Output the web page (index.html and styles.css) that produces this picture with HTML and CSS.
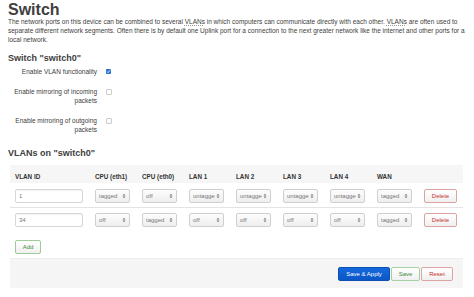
FILE: index.html
```html
<!DOCTYPE html>
<html>
<head>
<meta charset="utf-8">
<link rel="stylesheet" href="styles.css">
</head>
<body>
<div class="page">
  <h2 class="title">Switch</h2>
  <p class="desc">The network ports on this device can be combined to several <abbr>VLANs</abbr> in which computers can communicate directly with each other. <abbr>VLANs</abbr> are often used to separate different network segments. Often there is by default one Uplink port for a connection to the next greater network like the internet and other ports for a local network.</p>

  <h3 class="section-title">Switch "switch0"</h3>
  <div class="form-row">
    <label class="form-label">Enable VLAN functionality</label>
    <span class="cb checked"><svg viewBox="0 0 6 6" width="6" height="6"><path d="M1.3 3.1 L2.5 4.3 L4.8 1.6" fill="none" stroke="#fff" stroke-width="1.1"/></svg></span>
  </div>
  <div class="form-row">
    <label class="form-label">Enable mirroring of incoming packets</label>
    <span class="cb"></span>
  </div>
  <div class="form-row">
    <label class="form-label">Enable mirroring of outgoing packets</label>
    <span class="cb"></span>
  </div>

  <h3 class="section-title vlans">VLANs on "switch0"</h3>
  <table class="vlan-table">
    <colgroup>
      <col class="c-id"><col class="c-port"><col class="c-port"><col class="c-port"><col class="c-port"><col class="c-port"><col class="c-port"><col class="c-port"><col class="c-del">
    </colgroup>
    <thead>
      <tr><th>VLAN ID</th><th>CPU (eth1)</th><th>CPU (eth0)</th><th>LAN 1</th><th>LAN 2</th><th>LAN 3</th><th>LAN 4</th><th>WAN</th><th></th></tr>
    </thead>
    <tbody>
      <tr>
        <td><input class="txt" type="text" value="1"></td>
        <td><select class="sel"><option>tagged</option></select></td>
        <td><select class="sel"><option>off</option></select></td>
        <td><select class="sel"><option>untagged</option></select></td>
        <td><select class="sel"><option>untagged</option></select></td>
        <td><select class="sel"><option>untagged</option></select></td>
        <td><select class="sel"><option>untagged</option></select></td>
        <td><select class="sel"><option>tagged</option></select></td>
        <td><button class="btn btn-del">Delete</button></td>
      </tr>
      <tr>
        <td><input class="txt" type="text" value="34"></td>
        <td><select class="sel"><option>off</option></select></td>
        <td><select class="sel"><option>tagged</option></select></td>
        <td><select class="sel"><option>off</option></select></td>
        <td><select class="sel"><option>off</option></select></td>
        <td><select class="sel"><option>off</option></select></td>
        <td><select class="sel"><option>off</option></select></td>
        <td><select class="sel"><option>tagged</option></select></td>
        <td><button class="btn btn-del">Delete</button></td>
      </tr>
    </tbody>
  </table>
  <div class="add-row"><button class="btn btn-add">Add</button></div>

  <div class="actions">
    <button class="btn btn-apply">Save &amp; Apply</button>
    <button class="btn btn-save">Save</button>
    <button class="btn btn-reset">Reset</button>
  </div>
</div>
</body>
</html>
```

FILE: styles.css
```css
html, body {
  margin: 0;
  padding: 0;
  background: #fff;
}
body {
  font-family: "Liberation Sans", Arial, sans-serif;
  color: #404040;
  font-size: 6.5px;
  line-height: 9px;
}
.page {
  padding: 0 8px;
}
.title {
  margin: 0;
  padding-top: 1px;
  font-size: 16px;
  line-height: 18px;
  font-weight: bold;
  color: #404040;
}
.desc {
  margin: -2px 0 0;
  width: 457px;
  line-height: 9px;
}
abbr {
  text-decoration: underline dotted #999;
  text-underline-offset: 1px;
}
.section-title {
  margin: 9px 0 0;
  font-size: 9px;
  line-height: 10px;
  font-weight: bold;
  color: #404040;
}
.section-title.vlans {
  margin-top: 7px;
  margin-bottom: 7px;
}
.form-row {
  display: flex;
  align-items: flex-start;
  padding: 4px 0 7px;
}
.form-label {
  width: 86px;
  margin-left: 3px;
  text-align: right;
}
.cb {
  display: inline-flex;
  align-items: center;
  justify-content: center;
  width: 4px;
  height: 4px;
  margin: 2px 0 0 9px;
  border: 0.5px solid #ccc;
  border-radius: 1px;
  background: #fff;
}
.cb.checked {
  width: 5px;
  height: 5px;
  border: none;
  background: #2a6fd2;
}
.cb svg {
  display: block;
  width: 5px;
  height: 5px;
}
.vlan-table {
  margin-left: 2px;
  width: 453px;
  border-collapse: collapse;
  table-layout: fixed;
}
.c-id { width: 80px; }
.c-port { width: 47px; }
.c-del { width: 44px; }
.vlan-table th {
  background: #f6f6f6;
  text-align: left;
  font-weight: bold;
  font-size: 6.3px;
  line-height: 9px;
  padding: 7px 5px 2px;
  color: #333;
}
.vlan-table td {
  padding: 5px 5px 4px;
  border-top: 1px solid #e4e4e4;
  vertical-align: top;
}
.vlan-table tbody tr:first-child td {
  border-top: none;
  padding-top: 6px;
}
.txt {
  box-sizing: border-box;
  width: 68px;
  height: 14px;
  margin: 0;
  padding: 0 3px;
  border: 1px solid #d6d6d6;
  border-radius: 2px;
  font-family: inherit;
  font-size: 6px;
  color: #777;
  box-shadow: inset 0 1px 1px rgba(0,0,0,0.05);
}
.sel {
  -webkit-appearance: none;
  appearance: none;
  box-sizing: border-box;
  width: 35px;
  height: 14px;
  margin: 0;
  padding: 0 8px 0 3px;
  border: 1px solid #cfcfcf;
  border-radius: 2px;
  font-family: inherit;
  font-size: 6px;
  color: #777;
  background-color: #f7f7f7;
  background-image: url("data:image/svg+xml;utf8,<svg xmlns='http://www.w3.org/2000/svg' width='4' height='6' viewBox='0 0 4 6'><path d='M0.5 2.4 L2 0.8 L3.5 2.4 Z M0.5 3.6 L2 5.2 L3.5 3.6 Z' fill='%23777'/></svg>"), linear-gradient(#fdfdfd, #eeeeee);
  background-repeat: no-repeat, no-repeat;
  background-position: right 3px center, 0 0;
  background-size: 4px 6px, 100% 100%;
}
.btn {
  box-sizing: border-box;
  height: 14px;
  margin: 0;
  padding: 0 5px;
  border: 1px solid #ccc;
  border-radius: 2px;
  font-family: inherit;
  font-size: 6px;
  line-height: 12px;
  background: linear-gradient(#ffffff, #f0f0f0);
  cursor: pointer;
}
.btn-del {
  width: 33px;
  color: #c9302c;
  border-color: #dca3a3;
}
.add-row {
  padding: 9px 0 4px 7px;
}
.btn-add {
  width: 26px;
  color: #3a8a3a;
  border-color: #9ccc9c;
}
.actions {
  margin-left: 2px;
  width: 453px;
  box-sizing: border-box;
  background: #f5f5f5;
  border-top: 1px solid #eeeeee;
  padding: 8px 10px 7px 0;
  display: flex;
  justify-content: flex-end;
  gap: 1px;
}
.btn-apply {
  width: 52px;
  color: #fff;
  border-color: #0b4fb0;
  background: linear-gradient(#1469dd, #0a56c7);
}
.btn-save {
  width: 29px;
  color: #3a8a3a;
  border-color: #a5cfa5;
}
.btn-reset {
  width: 32px;
  color: #c9302c;
  border-color: #dca3a3;
}
```
